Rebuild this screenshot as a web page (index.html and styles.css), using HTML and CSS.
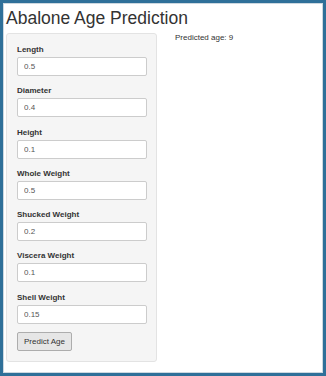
FILE: index.html
```html
<!DOCTYPE html>
<html>
  <head>
    <title>Abalone Age Prediction</title>
    <link rel="stylesheet" href="styles.css">
  </head>
  <body>
    <div class="frame">
      <h1>Abalone Age Prediction</h1>
      <div class="row">
        <div class="sidebar">
          <div class="field">
            <label>Length</label>
            <input type="text" value="0.5">
          </div>
          <div class="field">
            <label>Diameter</label>
            <input type="text" value="0.4">
          </div>
          <div class="field">
            <label>Height</label>
            <input type="text" value="0.1">
          </div>
          <div class="field">
            <label>Whole Weight</label>
            <input type="text" value="0.5">
          </div>
          <div class="field">
            <label>Shucked Weight</label>
            <input type="text" value="0.2">
          </div>
          <div class="field">
            <label>Viscera Weight</label>
            <input type="text" value="0.1">
          </div>
          <div class="field">
            <label>Shell Weight</label>
            <input type="text" value="0.15">
          </div>
          <button class="predict-button">Predict Age</button>
        </div>
        <div class="main">
          <p class="result">Predicted age: 9</p>
        </div>
      </div>
    </div>
  </body>
</html>
```

FILE: styles.css
```css
body {
  font-family: "Liberation Sans", Arial, sans-serif;
  margin: 0;
  background-color: #fff;
  color: #333;
}

.frame {
  box-sizing: border-box;
  width: 326px;
  height: 376px;
  border: 3px solid #2f7099;
  box-shadow: inset 0 0 0 1px #cdd8e0;
  padding: 0 0 0 3px;
}

h1 {
  font-size: 17.5px;
  font-weight: 500;
  line-height: 20px;
  margin: 5px 0 5px 0;
  color: #333;
}

.row {
  display: flex;
  align-items: flex-start;
}

.sidebar {
  box-sizing: border-box;
  width: 151px;
  background-color: #f5f5f5;
  border: 1px solid #e3e3e3;
  border-radius: 3px;
  padding: 10px;
}

.field {
  display: flex;
  flex-direction: column;
  margin-bottom: 9.3px;
}

.field label {
  font-size: 8px;
  font-weight: bold;
  line-height: 12px;
  margin: 0 0 1px 0;
  color: #333;
}

.field input {
  box-sizing: border-box;
  width: 130px;
  height: 19px;
  border: 1px solid #ccc;
  border-radius: 2px;
  padding: 0 6px;
  font-family: "Liberation Sans", Arial, sans-serif;
  font-size: 8px;
  color: #555;
  background-color: #fff;
}

.predict-button {
  display: block;
  margin-top: -1px;
  height: 19px;
  padding: 0 6px;
  font-family: "Liberation Sans", Arial, sans-serif;
  font-size: 8px;
  color: #333;
  background-color: #e6e6e6;
  border: 1px solid #adadad;
  border-radius: 2px;
}

.main {
  padding-left: 18px;
}

.result {
  margin: 0;
  font-size: 8px;
  line-height: 10px;
  color: #333;
}
```
